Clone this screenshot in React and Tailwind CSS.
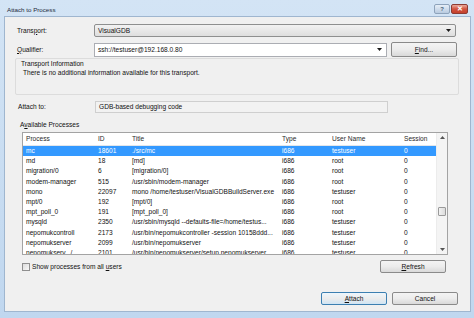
import React from 'react';

const rows = [
  ['mc', '18601', './src/mc', 'i686', 'testuser', '0'],
  ['md', '18', '[md]', 'i686', 'root', '0'],
  ['migration/0', '6', '[migration/0]', 'i686', 'root', '0'],
  ['modem-manager', '515', '/usr/sbin/modem-manager', 'i686', 'root', '0'],
  ['mono', '22097', 'mono /home/testuser/VisualGDBBuildServer.exe', 'i686', 'testuser', '0'],
  ['mpt/0', '192', '[mpt/0]', 'i686', 'root', '0'],
  ['mpt_poll_0', '191', '[mpt_poll_0]', 'i686', 'root', '0'],
  ['mysqld', '2350', '/usr/sbin/mysqld --defaults-file=/home/testus...', 'i686', 'testuser', '0'],
  ['nepomukcontroll', '2173', '/usr/bin/nepomukcontroller -session 10158ddd...', 'i686', 'testuser', '0'],
  ['nepomukserver', '2099', '/usr/bin/nepomukserver', 'i686', 'testuser', '0'],
  ['nepomukserv.../', '2101', '/usr/bin/nepomukserver/setup.nepomukserver', 'i686', 'testuser', '0'],
];

const cols = 'grid grid-cols-[72px_34px_150px_50px_72px_34px]';

function Arrow() {
  return (
    <svg width="5" height="3" viewBox="0 0 5 3">
      <polygon points="0,0 5,0 2.5,3" fill="#1a1a1a" />
    </svg>
  );
}

function Btn({ children, className = '' }) {
  return (
    <div
      className={`flex items-center justify-center rounded-[2px] border border-[#8a8a8a] bg-gradient-to-b from-[#f4f4f4] via-[#ececec] to-[#d9d9d9] ${className}`}
    >
      {children}
    </div>
  );
}

export default function App() {
  return (
    <div className="flex h-[318px] w-[474px] flex-col overflow-hidden bg-gradient-to-b from-[#d3e4f5] to-[#c0d7ef] font-['Liberation_Sans',Arial,sans-serif] text-[6.6px] leading-[8px] text-[#111]">
      {/* title bar */}
      <div className="flex h-[16px] shrink-0 items-start justify-between pl-[7px] pr-[6px]">
        <span className="mt-[6px] text-[6.2px] text-[#1e2a3a]">Attach to Process</span>
        <div className="mt-[4px] flex gap-[1px]">
          <div className="flex h-[10px] w-[16px] items-center justify-center rounded-[2px] border border-[#8ea3bb] bg-gradient-to-b from-[#e6eef7] to-[#b9cbe0] text-[6px] font-bold text-[#4b5e78]">
            ?
          </div>
          <div className="flex h-[10px] w-[17px] items-center justify-center rounded-[2px] border border-[#8d3b33] bg-gradient-to-b from-[#e9a89c] via-[#d1523f] to-[#c4412d] text-[7px] font-bold text-white">
            ✕
          </div>
        </div>
      </div>

      {/* client area */}
      <div className="mb-[6px] ml-[4px] mr-[3px] flex flex-1 flex-col border border-[#9fb6cf] bg-[#f0f0f0]">
        {/* transport */}
        <div className="mt-[7px] flex h-[13px] items-center pl-[12px]">
          <span className="w-[77px]">
            Trans<span className="underline">p</span>ort:
          </span>
          <div className="flex h-[13px] w-[362px] items-center justify-between rounded-[2px] border border-[#8e8f8f] bg-gradient-to-b from-[#f2f2f2] to-[#dedede] pl-[3px] pr-[4px]">
            <span>VisualGDB</span>
            <Arrow />
          </div>
        </div>

        {/* qualifier */}
        <div className="mt-[5px] flex h-[15px] items-center pl-[12px]">
          <span className="w-[77px]">
            <span className="underline">Q</span>ualifier:
          </span>
          <div className="flex h-[14px] w-[293px] items-center justify-between border border-[#abadb3] bg-white pl-[3px] pr-[4px]">
            <span>ssh://testuser@192.168.0.80</span>
            <Arrow />
          </div>
          <Btn className="ml-[4px] h-[15px] w-[66px]">
            <span>
              <span className="underline">F</span>ind...
            </span>
          </Btn>
        </div>

        {/* transport information */}
        <div className="ml-[10px] mt-[1px] h-[37px] w-[444px] rounded-[2px] border border-[#dcdcdc] pl-[5px] pt-[1px]">
          <div>Transport Information</div>
          <div className="pl-[2px] pt-[1px]">There is no additional information available for this transport.</div>
        </div>

        {/* attach to */}
        <div className="mt-[6px] flex h-[12px] items-center pl-[13px]">
          <span className="w-[77px]">Attach to:</span>
          <div className="flex h-[12px] w-[293px] items-center border border-[#cfcfcf] bg-[#f2f2f2] pl-[3px]">
            GDB-based debugging code
          </div>
        </div>

        {/* available processes */}
        <div className="mt-[8px] pl-[15px]">
          A<span className="underline">v</span>ailable Processes
        </div>

        {/* list */}
        <div className="ml-[17px] mt-[3px] flex h-[123px] w-[426px] overflow-hidden border border-[#a3a3a3] bg-white">
          <div className="flex w-[413px] flex-col overflow-hidden">
            <div className={`${cols} h-[13px] shrink-0 items-center border-b border-[#e3e6ea] text-[#2a2a2a]`}>
              <span className="pl-[3px]">Process</span>
              <span className="pl-[3px]">ID</span>
              <span className="pl-[3px]">Title</span>
              <span className="pl-[3px]">Type</span>
              <span className="pl-[3px]">User Name</span>
              <span className="pl-[3px]">Session</span>
            </div>
            {rows.map((r, i) => (
              <div
                key={i}
                className={`${cols} h-[10.2px] shrink-0 items-center ${i === 0 ? 'bg-[#3399ff] text-white' : ''}`}
              >
                {r.map((c, j) => (
                  <span key={j} className="overflow-hidden whitespace-nowrap pl-[3px]">
                    {c}
                  </span>
                ))}
              </div>
            ))}
          </div>
          <div className="relative flex w-[11px] flex-col items-center justify-between border-l border-[#ececec] bg-[#f4f4f4] py-[3px]">
            <svg width="5" height="3" viewBox="0 0 5 3">
              <polygon points="0,3 5,3 2.5,0" fill="#555" />
            </svg>
            <div className="absolute left-[1px] top-[74px] h-[9px] w-[8px] rounded-[1px] border border-[#9a9a9a] bg-gradient-to-r from-[#f2f2f2] to-[#dcdcdc]" />
            <svg width="5" height="3" viewBox="0 0 5 3">
              <polygon points="0,0 5,0 2.5,3" fill="#555" />
            </svg>
          </div>
        </div>

        {/* checkbox + refresh */}
        <div className="mt-[5px] flex h-[13px] items-center pl-[17px] pr-[24px]">
          <div className="h-[8px] w-[8px] border border-[#8f8f8f] bg-gradient-to-br from-[#dcdcdc] to-[#f8f8f8]" />
          <span className="ml-[2px]">
            Show processes from all <span className="underline">u</span>sers
          </span>
          <Btn className="ml-auto h-[13px] w-[66px]">
            <span>
              <span className="underline">R</span>efresh
            </span>
          </Btn>
        </div>

        {/* bottom buttons */}
        <div className="mt-[19px] flex justify-end gap-[5px] pr-[12px]">
          <Btn className="h-[13px] w-[66px] !border-[#3c7fb1] !from-[#eef6fc] !to-[#cfe4f4]">
            <span>
              <span className="underline">A</span>ttach
            </span>
          </Btn>
          <Btn className="h-[13px] w-[66px]">Cancel</Btn>
        </div>
      </div>
    </div>
  );
}
